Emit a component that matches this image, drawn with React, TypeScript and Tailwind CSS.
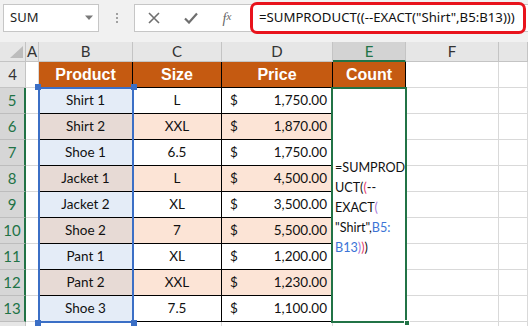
import React from "react";

const COLS = ["A", "B", "C", "D", "E", "F", ""];

const ROWS = [
  { name: "Shirt 1", size: "L", price: "1,750.00" },
  { name: "Shirt 2", size: "XXL", price: "1,870.00" },
  { name: "Shoe 1", size: "6.5", price: "1,750.00" },
  { name: "Jacket 1", size: "L", price: "4,500.00" },
  { name: "Jacket 2", size: "XL", price: "3,500.00" },
  { name: "Shoe 2", size: "7", price: "5,500.00" },
  { name: "Pant 1", size: "XL", price: "1,200.00" },
  { name: "Pant 2", size: "XXL", price: "1,230.00" },
  { name: "Shoe 3", size: "7.5", price: "1,100.00" },
];

const cellFont = "font-['Lato',sans-serif] text-[13.5px] text-[#111]";

function Handle({ className }: { className: string }) {
  return <div className={`absolute w-[6px] h-[6px] bg-[#3b6fc6] ${className}`} />;
}

function FormulaBar() {
  return (
    <div className="h-[42px] bg-[#f1f1f1] flex items-start">
      <div className="ml-[3px] mt-[4px] w-[96px] h-[28px] bg-white border border-[#c6c6c6] flex items-center justify-between pl-[6px] pr-[4px]">
        <span className="font-['Noto_Sans',sans-serif] text-[13px] text-[#222]">SUM</span>
        <svg width="10" height="6" viewBox="0 0 10 6">
          <path d="M1 0.5 L9 0.5 L5 5 Z" fill="#7a7a7a" />
        </svg>
      </div>
      <div className="w-[35px] h-[36px] flex flex-col items-center justify-center gap-[2px]">
        <div className="w-[2px] h-[2px] bg-[#a0a0a0]" />
        <div className="w-[2px] h-[2px] bg-[#a0a0a0]" />
        <div className="w-[2px] h-[2px] bg-[#a0a0a0]" />
      </div>
      <div className="relative flex-1 mt-[4px] h-[28px] bg-white border border-r-0 border-[#c6c6c6] flex items-center">
        <div className="w-[112px] flex items-center">
          <div className="w-[38px] flex justify-center">
            <svg width="12" height="12" viewBox="0 0 12 12">
              <path d="M1 1 L11 11 M11 1 L1 11" stroke="#6f6f6f" strokeWidth="1.6" />
            </svg>
          </div>
          <div className="w-[36px] flex justify-center">
            <svg width="14" height="12" viewBox="0 0 14 12">
              <path d="M1 6.5 L5 10.5 L13 1.5" stroke="#6f6f6f" strokeWidth="2.2" fill="none" />
            </svg>
          </div>
          <div className="w-[36px] flex justify-center font-['Liberation_Serif',serif] italic text-[14px] text-[#666]">
            f<span className="text-[11px]">x</span>
          </div>
        </div>
        <div className="absolute left-[115px] top-[-3px] right-[2px] h-[32px] border-[3px] border-[#e8131c] rounded-[7px] flex items-center pl-[6px]">
          <span className="font-['Noto_Sans',sans-serif] text-[13.2px] text-[#111] whitespace-nowrap">
            =SUMPRODUCT((--EXACT("Shirt",B5:B13)))
          </span>
        </div>
      </div>
    </div>
  );
}

export default function App() {
  const gridLine = "border-r border-b border-[#d9d9d9]";
  const rhBase = "flex items-center justify-center font-['Lato',sans-serif] text-[15px] border-b";

  return (
    <div className="w-[528px] h-[326px] overflow-hidden bg-white">
      <FormulaBar />
      <div className="grid grid-cols-[26px_13px_94px_89px_111px_73px_93px_1fr] grid-rows-[20px_26px_repeat(9,26px)_1fr] h-[284px]">
        {/* column headers */}
        <div className="bg-[#e6e6e6] border-r border-b border-[#c4c4c4] relative">
          <svg className="absolute left-[10px] top-[4px]" width="13" height="12" viewBox="0 0 13 12">
            <path d="M13 0 L13 12 L0 12 Z" fill="#bcbcbc" />
          </svg>
        </div>
        {COLS.map((c) =>
          c === "E" ? (
            <div key={c} className="bg-[#d3d3d3] border-r border-[#c4c4c4] border-b-2 border-b-[#217346] flex items-center justify-center font-['Lato',sans-serif] text-[15px] text-[#217346]">
              {c}
            </div>
          ) : (
            <div key={c || "g"} className="bg-[#e6e6e6] border-r border-b border-[#c4c4c4] flex items-center justify-center font-['Lato',sans-serif] text-[15px] text-[#333]">
              {c}
            </div>
          )
        )}

        {/* row 4 */}
        <div className={`${rhBase} bg-[#e6e6e6] border-r border-[#c4c4c4] text-[#333]`}>4</div>
        <div className={gridLine} />
        {["Product", "Size", "Price", "Count"].map((h) => (
          <div key={h} className="bg-[#c55a11] border-r border-b border-black flex items-center justify-center font-['Liberation_Sans',sans-serif] font-bold text-[16px] text-white">
            {h}
          </div>
        ))}
        <div className={gridLine} />
        <div className={gridLine} />

        {/* B5:B13 with reference highlight */}
        <div className="col-start-3 row-start-3 row-span-9 relative flex flex-col">
          {ROWS.map((r, i) => (
            <div key={r.name} className={`flex-1 flex items-center justify-center border-r border-b border-black ${i % 2 ? "bg-[#e7dad5]" : "bg-[#e4ecf7]"} ${cellFont}`}>
              {r.name}
            </div>
          ))}
          <div className="absolute -left-px -top-px -right-px -bottom-px border-2 border-[#3b6fc6]" />
          <Handle className="-left-[4px] -top-[4px]" />
          <Handle className="-right-[4px] -top-[4px]" />
          <Handle className="-left-[4px] -bottom-[4px]" />
          <Handle className="-right-[4px] -bottom-[4px]" />
        </div>

        {/* E5:E13 merged, in edit mode */}
        <div className="col-start-6 row-start-3 row-span-9 relative bg-white flex flex-col justify-center pl-[2px] pt-[6px] font-['Lato',sans-serif] text-[12.6px] leading-[20px] text-[#111]">
          <div>=SUMPROD</div>
          <div>
            UCT(<span className="text-[#e5406f]">(</span>--
          </div>
          <div>
            EXACT<span className="text-[#a77ad8]">(</span>
          </div>
          <div>
            "Shirt",<span className="text-[#3b74d6]">B5:</span>
          </div>
          <div>
            <span className="text-[#3b74d6]">B13</span>
            <span className="text-[#a77ad8]">)</span>
            <span className="text-[#e5406f]">)</span>)
          </div>
          <div className="absolute -left-[2px] -top-[1px] -right-px -bottom-px border-[2.5px] border-[#217346]" />
          <div className="absolute -right-[4px] -bottom-[4px] w-[6px] h-[6px] bg-[#217346] border border-white" />
        </div>

        {/* rows 5..13 */}
        {ROWS.map((r, i) => {
          const fill = i % 2 ? "bg-[#fce4d6]" : "bg-white";
          return (
            <React.Fragment key={r.name}>
              <div className={`${rhBase} bg-[#d6d6d6] border-[#bdbdbd] border-r-2 border-r-[#217346] text-[#217346]`}>
                {i + 5}
              </div>
              <div className={gridLine} />
              <div className={`${fill} border-r border-b border-black flex items-center justify-center ${cellFont}`}>
                {r.size}
              </div>
              <div className={`${fill} border-r border-b border-black flex items-center justify-between pl-[8px] pr-[5px] ${cellFont}`}>
                <span>$</span>
                <span>{r.price}</span>
              </div>
              <div className={gridLine} />
              <div className={gridLine} />
            </React.Fragment>
          );
        })}

        {/* row 14, cut off */}
        <div className="bg-[#e6e6e6] border-r border-[#c4c4c4]" />
        {COLS.map((c) => (
          <div key={"r14" + c} className="border-r border-[#d9d9d9]" />
        ))}
      </div>
    </div>
  );
}
